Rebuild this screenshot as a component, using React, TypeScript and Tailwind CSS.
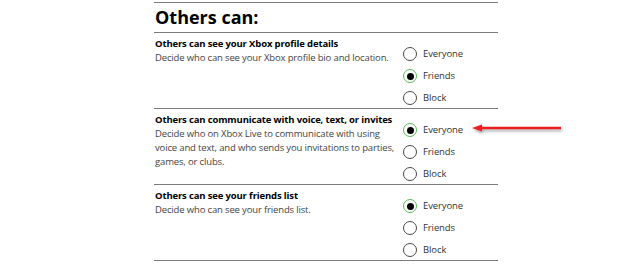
import React from 'react';

type Choice = 'Everyone' | 'Friends' | 'Block';

interface Setting {
  title: string;
  description: React.ReactNode;
  value: Choice;
}

const settings: Setting[] = [
  {
    title: 'Others can see your Xbox profile details',
    description: 'Decide who can see your Xbox profile bio and location.',
    value: 'Friends',
  },
  {
    title: 'Others can communicate with voice, text, or invites',
    description: (
      <>
        Decide who on Xbox Live to communicate with using
        <br />
        voice and text, and who sends you invitations to parties,
        <br />
        games, or clubs.
      </>
    ),
    value: 'Everyone',
  },
  {
    title: 'Others can see your friends list',
    description: 'Decide who can see your friends list.',
    value: 'Everyone',
  },
];

const choices: Choice[] = ['Everyone', 'Friends', 'Block'];

const Radio = ({ checked }: { checked: boolean }) => (
  <span
    className={`flex h-[14px] w-[14px] items-center justify-center rounded-full border ${
      checked ? 'border-[#5cb85c]' : 'border-[#4a4a4a]'
    }`}
  >
    {checked && <span className="h-[7px] w-[7px] rounded-full bg-black" />}
  </span>
);

// red annotation arrow pointing at the selected option
const Arrow = () => (
  <svg
    className="absolute left-[470px] top-[122px]"
    width="96"
    height="14"
    viewBox="0 0 96 14"
    style={{ filter: 'drop-shadow(1px 2px 1.5px rgba(0,0,0,0.35))' }}
  >
    <line x1="10" y1="6" x2="91" y2="6" stroke="#ee1c1c" strokeWidth="2.4" />
    <polygon points="2,6 12,2.5 12,9.5" fill="#ee1c1c" />
  </svg>
);

export default function App() {
  return (
    <div
      className="relative h-[268px] w-[640px] bg-white text-black"
      style={{ fontFamily: '"Open Sans", "Noto Sans", sans-serif' }}
    >
      <div className="ml-[154px] w-[344px] pt-[2px]">
        <div className="h-[31px] border-y border-[#7d7d7d] pl-px">
          <h1 className="pt-[2px] text-[18px] font-bold leading-[24px]">Others can:</h1>
        </div>
        {settings.map((s) => (
          <div key={s.title} className="flex h-[76px] border-b border-[#7d7d7d]">
            <div className="w-[249px] pl-px pt-[4px]">
              <div className="whitespace-nowrap text-[9.5px] font-bold leading-[14px] tracking-[-0.15px]">{s.title}</div>
              <div className="whitespace-nowrap text-[9.5px] leading-[14px] tracking-[-0.15px] text-[#444]">{s.description}</div>
            </div>
            <div className="flex flex-col gap-[8px] pt-[14px]">
              {choices.map((c) => (
                <label key={c} className="flex h-[14px] items-center gap-[6px] text-[9.5px] tracking-[-0.1px] text-[#333]">
                  <Radio checked={c === s.value} />
                  <span>{c}</span>
                </label>
              ))}
            </div>
          </div>
        ))}
      </div>
      <Arrow />
    </div>
  );
}
